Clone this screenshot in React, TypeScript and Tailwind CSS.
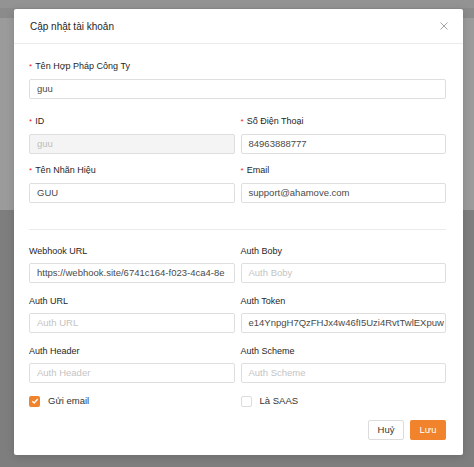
import React from "react";

const Field = ({
	label,
	value,
	placeholder,
	required,
	disabled,
	gap = "mb-[7px]",
}: {
	label: string;
	value?: string;
	placeholder?: string;
	required?: boolean;
	disabled?: boolean;
	gap?: string;
}) => (
	<div className="flex flex-col min-w-0">
		<label className={`h-[12px] leading-[12px] text-[9px] text-[#262626] whitespace-nowrap ${gap}`}>
			{required && <span className="text-[#f5222d] mr-[3px] text-[8px]">*</span>}
			{label}
		</label>
		<div
			className={`h-[20px] border border-[#dedede] rounded-[2px] px-[7px] flex items-center overflow-hidden whitespace-nowrap text-[9.5px] ${
				disabled ? "bg-[#f4f4f4] text-[#bdbdbd]" : "bg-white text-[#4a4a4a]"
			}`}
		>
			{value ? value : <span className="text-[#c4c4c4]">{placeholder}</span>}
		</div>
	</div>
);

const Check = ({ checked, label }: { checked: boolean; label: string }) => (
	<div className="flex items-center h-[12px] gap-[8px] text-[9.5px] text-[#333]">
		<span
			className={`w-[11px] h-[11px] rounded-[2px] flex items-center justify-center ${
				checked ? "bg-[#f0832b]" : "bg-white border border-[#dcdcdc]"
			}`}
		>
			{checked && (
				<svg width="8" height="8" viewBox="0 0 8 8">
					<polyline points="1.3,4.2 3.2,6 6.7,2" fill="none" stroke="white" strokeWidth="1.4" />
				</svg>
			)}
		</span>
		{label}
	</div>
);

export default function App() {
	return (
		<div
			className="relative w-[474px] h-[467px] overflow-hidden"
			style={{ fontFamily: '"Liberation Sans", Arial, sans-serif' }}
		>
			{/* dimmed page underneath */}
			<div className="flex flex-col h-full">
				<div className="h-[8px] bg-[#939393]" />
				<div className="h-[10px] bg-[#8b8b8b]" />
				<div className="h-[192px] bg-[#9b9b9b]" />
				<div className="flex-1 bg-[#7e7e7e]" />
			</div>

			{/* modal */}
			<div className="absolute left-[14px] top-[9px] w-[449px] bg-white rounded-[2px] shadow-[0_2px_8px_rgba(0,0,0,0.15)] flex flex-col">
				<div className="h-[35px] border-b border-[#ebebeb] flex items-center justify-between pl-[16px] pr-[15px]">
					<span className="text-[10px] font-medium text-[#262626]">Cập nhật tài khoản</span>
					<svg width="8" height="8" viewBox="0 0 8 8">
						<path d="M0.5 0.5L7.5 7.5M7.5 0.5L0.5 7.5" stroke="#9a9a9a" strokeWidth="0.9" />
					</svg>
				</div>

				<div className="pl-[15px] pr-[17px] pt-[16px] pb-[15px] flex flex-col">
					<div className="mb-[16px]">
						<Field label="Tên Hợp Pháp Công Ty" value="guu" required />
					</div>
					<div className="grid grid-cols-2 gap-x-[6px] gap-y-[10px]">
						<Field label="ID" value="guu" required disabled />
						<Field label="Số Điện Thoại" value="84963888777" required />
						<Field label="Tên Nhãn Hiệu" value="GUU" required />
						<Field label="Email" value="support@ahamove.com" required />
					</div>

					<div className="h-px bg-[#ebebeb] mt-[26px] mb-[15px]" />

					<div className="grid grid-cols-2 gap-x-[6px] gap-y-[12px]">
						<Field
							label="Webhook URL"
							value="https://webhook.site/6741c164-f023-4ca4-8e"
							gap="mb-[6px]"
						/>
						<Field label="Auth Boby" placeholder="Auth Boby" gap="mb-[6px]" />
						<Field label="Auth URL" placeholder="Auth URL" gap="mb-[6px]" />
						<Field
							label="Auth Token"
							value="e14YnpgH7QzFHJx4w46fI5Uzi4RvtTwlEXpuw"
							gap="mb-[6px]"
						/>
						<Field label="Auth Header" placeholder="Auth Header" gap="mb-[6px]" />
						<Field label="Auth Scheme" placeholder="Auth Scheme" gap="mb-[6px]" />
					</div>

					<div className="grid grid-cols-2 gap-x-[6px] mt-[12px]">
						<Check checked label="Gửi email" />
						<Check checked={false} label="Là SAAS" />
					</div>

					<div className="flex justify-end gap-[6px] mt-[13px]">
						<button className="w-[36px] h-[20px] border border-[#dcdcdc] rounded-[2px] bg-white text-[9.5px] text-[#333]">
							Huỷ
						</button>
						<button className="w-[36px] h-[20px] rounded-[2px] bg-[#f0832b] text-[9.5px] text-white">
							Lưu
						</button>
					</div>
				</div>
			</div>
		</div>
	);
}
